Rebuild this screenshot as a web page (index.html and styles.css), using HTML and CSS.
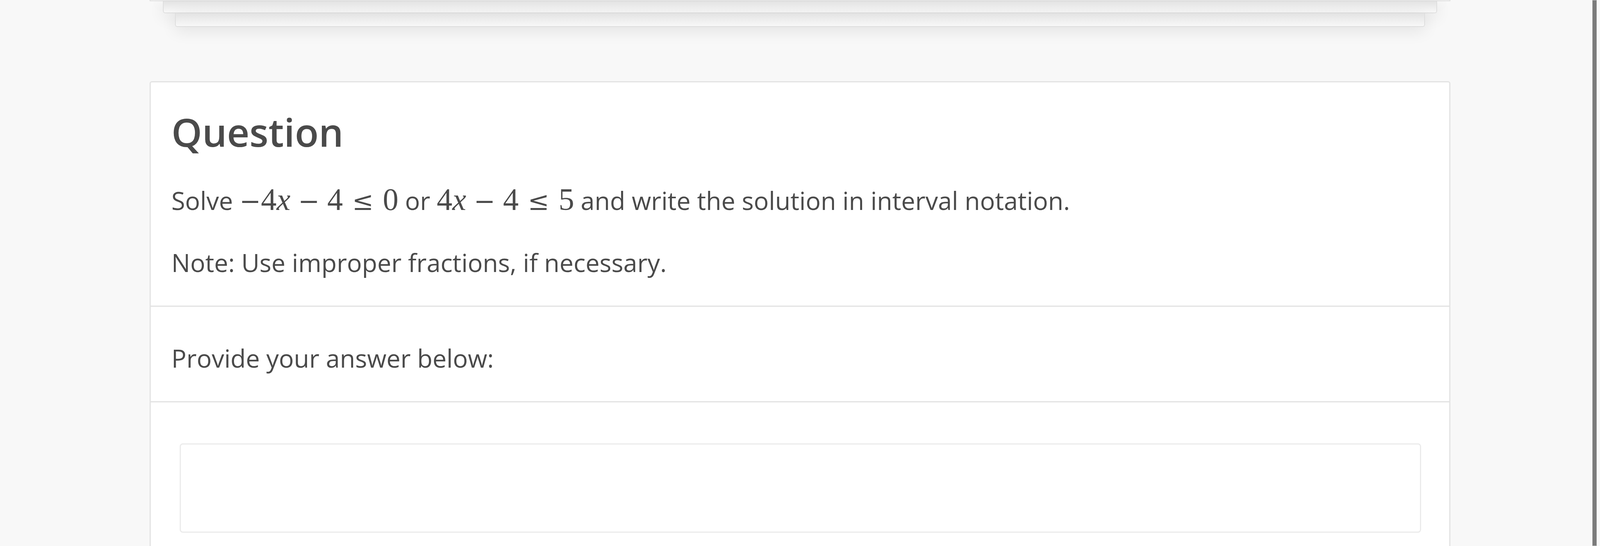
FILE: index.html
```html
<!DOCTYPE html>
<html lang="en">
  <head>
    <meta charset="UTF-8" />
    <meta name="viewport" content="width=device-width, initial-scale=1.0" />
    <title>Question</title>
    <link rel="stylesheet" href="styles.css">
  </head>
  <body>
    <main class="page">
      <!-- bottom of the previous card, with its stacked sheets -->
      <div class="stack">
        <div class="sheet sheet-prev"></div>
        <div class="sheet sheet-1"></div>
        <div class="sheet sheet-2"></div>
      </div>

      <section class="card">
        <div class="card-section question">
          <h2>Question</h2>
          <p>
            Solve
            <span class="math"><span class="mo">&minus;</span>4<i>x</i><span class="bin">&minus;</span>4<span class="rel">&le;</span>0</span>
            or
            <span class="math">4<i>x</i><span class="bin">&minus;</span>4<span class="rel">&le;</span>5</span>
            and write the solution in interval notation.
          </p>
          <p>Note: Use improper fractions, if necessary.</p>
        </div>

        <div class="card-section prompt">
          <p>Provide your answer below:</p>
        </div>

        <div class="card-section answer">
          <div class="answer-box" contenteditable="true"></div>
        </div>
      </section>
    </main>
    <div class="scroll-thumb"></div>
  </body>
</html>
```

FILE: styles.css
```css
html,
body {
  margin: 0;
  padding: 0;
}
body {
  background-color: #f8f8f8;
  font-family: "Open Sans", "Noto Sans", sans-serif;
  color: #4a4a4a;
}
.page {
  width: 81.32%;
  height: 100vh;
  margin: 0 auto;
  overflow: hidden;
}

/* stacked sheets */
.stack {
  display: flex;
  flex-direction: column;
}
.sheet {
  box-sizing: border-box;
  border: 2px solid #dedede;
  border-top: none;
  border-radius: 0 0 6px 6px;
  background: linear-gradient(#e3e3e3, #f8f8f8);
  box-shadow: 0 10px 40px rgba(0, 0, 0, 0.09);
}
.sheet-prev {
  height: 3px;
  background: #ffffff;
  border-radius: 0;
}
.sheet-1 {
  height: 31px;
  margin: 0 1.02% 0 1.04%;
}
.sheet-2 {
  height: 35px;
  margin: 0 1.96%;
}

/* card */
.card {
  margin-top: 139px;
  background-color: #ffffff;
  border: 3px solid #e3e3e3;
  border-bottom: none;
  border-radius: 6px 6px 0 0;
}
.card-section {
  padding: 0 1.6%;
}
.card-section + .card-section {
  border-top: 3px solid #e2e2e2;
}
.card-section p {
  margin: 0;
  font-size: 64px;
  line-height: 1.5;
}
.card-section p + p {
  margin-top: 63px;
}
.question {
  padding-top: 66px;
  padding-bottom: 62px;
}
.question h2 {
  margin: 0 0 69px;
  font-size: 100px;
  font-weight: 600;
  line-height: 1.2;
}
.prompt {
  padding-top: 84px;
  padding-bottom: 62px;
}
.answer {
  padding: 105px 2.19% 200px 2.25%;
}
.answer-box {
  height: 223px;
  border: 3px solid #ebebeb;
  border-radius: 8px;
  outline: none;
}

/* inline math */
.math {
  font-family: "Liberation Serif", "DejaVu Serif", serif;
  font-size: 80px;
  line-height: 1;
  white-space: nowrap;
}
.math i {
  font-style: italic;
}
.math .mo,
.math .bin,
.math .rel {
  font-family: "DejaVu Serif", "Liberation Serif", serif;
  font-size: 0.82em;
}
.math .bin {
  margin: 0 0.3em;
}
.math .rel {
  margin: 0 0.36em;
}

.scroll-thumb {
  position: fixed;
  top: 0;
  bottom: 0;
  right: 8px;
  width: 10px;
  background-color: #7b7b7b;
  border: 1px solid #c8c8c8;
}
```
